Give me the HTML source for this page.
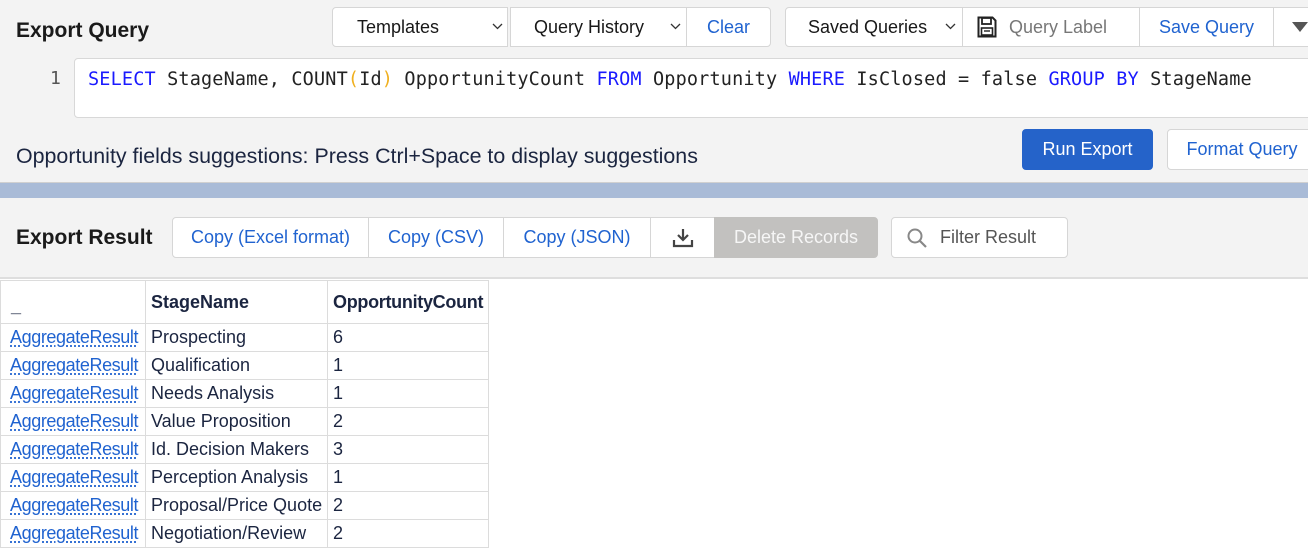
<!DOCTYPE html>
<html><head><meta charset="utf-8">
<style>
*{box-sizing:border-box;margin:0;padding:0}
body{width:1308px;height:560px;overflow:hidden;background:#fff;font-family:"Liberation Sans",sans-serif;position:relative}
.abs{position:absolute}
.top{left:0;top:0;width:1308px;height:182px;background:#f3f3f3}
.band{left:0;top:182px;width:1308px;height:16px;background:#a9bbd7;border-top:1px solid #d0d0d0}
.mid{left:0;top:198px;width:1308px;height:81px;background:#f3f3f3;border-bottom:2px solid #dedede}
.btn{position:absolute;background:#fff;border:1px solid #d6d6d6;display:flex;align-items:center;justify-content:center;font-size:18px;color:#181818}
.blue{color:#2063d0}
.chev{position:absolute}
h1{position:absolute;font-size:21px;font-weight:bold;color:#1a1a1a}
.editor{left:74px;top:58px;width:1240px;height:60px;background:#fff;border:1px solid #d8d8d8;border-radius:4px}
.code{left:88px;top:69px;font-family:"DejaVu Sans Mono","Liberation Mono",monospace;font-size:18.5px;color:#222;white-space:pre;letter-spacing:0.16px}
.kw{color:#1a1aff}.par{color:#f0b020}
table{position:absolute;left:0;top:280px;border-collapse:collapse;font-size:18px;color:#1b2540;table-layout:fixed;width:488px}
td,th{border:1px solid #dcdcdc;height:28px;padding:0 5px;text-align:left;white-space:nowrap;overflow:hidden}
th{height:43px;font-weight:bold;vertical-align:middle}
td a{color:#2063d0;text-decoration:underline dotted;text-underline-offset:3px;letter-spacing:-0.4px;margin-left:4px}
</style></head><body>
<div class="abs top"></div>
<h1 style="left:16px;top:19px">Export Query</h1>
<div class="btn" style="left:332px;top:7px;width:176px;height:40px;border-radius:4px 0 0 4px;justify-content:flex-start;padding-left:24px">Templates</div>
<svg class="chev" style="left:492px;top:23px" width="11" height="7"><path d="M1 1l4.5 4.5L10 1" fill="none" stroke="#333" stroke-width="1.3"/></svg>
<div class="btn" style="left:510px;top:7px;width:177px;height:40px;justify-content:flex-start;padding-left:23px">Query History</div>
<svg class="chev" style="left:670px;top:23px" width="11" height="7"><path d="M1 1l4.5 4.5L10 1" fill="none" stroke="#333" stroke-width="1.3"/></svg>
<div class="btn blue" style="left:686px;top:7px;width:85px;height:40px;border-radius:0 4px 4px 0">Clear</div>
<div class="btn" style="left:785px;top:7px;width:178px;height:40px;border-radius:4px 0 0 4px;justify-content:flex-start;padding-left:22px">Saved Queries</div>
<svg class="chev" style="left:945px;top:23px" width="11" height="7"><path d="M1 1l4.5 4.5L10 1" fill="none" stroke="#333" stroke-width="1.3"/></svg>
<div class="btn" style="left:962px;top:7px;width:178px;height:40px;justify-content:flex-start;padding-left:14px;color:#777">
<svg width="20" height="22" viewBox="0 0 20 22" style="margin-right:12px"><path d="M1.5 1.5h14l3 3v16h-17z" fill="none" stroke="#222" stroke-width="2"/><rect x="5" y="2" width="9" height="6" fill="none" stroke="#222" stroke-width="1.8"/><rect x="4.5" y="12" width="11" height="7" fill="none" stroke="#222" stroke-width="1.6"/><path d="M7 15h6" stroke="#222" stroke-width="1.4"/></svg>Query Label</div>
<div class="btn blue" style="left:1139px;top:7px;width:135px;height:40px">Save Query</div>
<div class="btn" style="left:1273px;top:7px;width:40px;height:40px;justify-content:flex-start;padding-left:18px"><svg width="16" height="10"><path d="M0 0h16L8 10z" fill="#555"/></svg></div>
<div class="abs" style="left:50px;top:68px;font-size:18px;color:#555;font-family:'DejaVu Sans Mono',monospace">1</div>
<div class="abs editor"></div>
<div class="abs code"><span class="kw">SELECT</span> StageName, COUNT<span class="par">(</span>Id<span class="par">)</span> OpportunityCount <span class="kw">FROM</span> Opportunity <span class="kw">WHERE</span> IsClosed = false <span class="kw">GROUP BY</span> StageName</div>
<div class="abs" style="left:16px;top:144px;font-size:21.4px;color:#1b2540">Opportunity fields suggestions: Press Ctrl+Space to display suggestions</div>
<div class="btn" style="left:1022px;top:129px;width:131px;height:41px;border-radius:4px;background:#2563c9;border-color:#2563c9;color:#fff">Run Export</div>
<div class="btn blue" style="left:1167px;top:129px;width:150px;height:41px;border-radius:4px">Format Query</div>
<div class="abs band"></div>
<div class="abs mid"></div>
<h1 style="left:16px;top:226px">Export Result</h1>
<div class="btn blue" style="left:172px;top:217px;width:197px;height:41px;border-radius:4px 0 0 4px">Copy (Excel format)</div>
<div class="btn blue" style="left:368px;top:217px;width:136px;height:41px">Copy (CSV)</div>
<div class="btn blue" style="left:503px;top:217px;width:148px;height:41px">Copy (JSON)</div>
<div class="btn" style="left:650px;top:217px;width:65px;height:41px"><svg width="22" height="20" viewBox="0 0 22 20"><path d="M11 1v11M6 7l5 5 5-5" fill="none" stroke="#444" stroke-width="2.2"/><path d="M2 12v6h18v-6" fill="none" stroke="#444" stroke-width="2.2"/></svg></div>
<div class="btn" style="left:714px;top:217px;width:164px;height:41px;background:#c2c1bf;border-color:#c2c1bf;color:#f6f6f6;border-radius:0 4px 4px 0">Delete Records</div>
<div class="btn" style="left:891px;top:217px;width:177px;height:41px;border-radius:4px;justify-content:flex-start;padding-left:14px;color:#555">
<svg width="22" height="22" viewBox="0 0 22 22" style="margin-right:12px"><circle cx="9" cy="9" r="6.5" fill="none" stroke="#888" stroke-width="2"/><path d="M14 14l6 6" stroke="#888" stroke-width="2.2"/></svg>Filter Result</div>
<table>
<colgroup><col style="width:145px"><col style="width:182px"><col style="width:161px"></colgroup>
<tr><th style="vertical-align:bottom;padding-bottom:6px;padding-left:10px">_</th><th>StageName</th><th style="letter-spacing:-0.3px">OpportunityCount</th></tr>
<tr><td><a>AggregateResult</a></td><td>Prospecting</td><td>6</td></tr>
<tr><td><a>AggregateResult</a></td><td>Qualification</td><td>1</td></tr>
<tr><td><a>AggregateResult</a></td><td>Needs Analysis</td><td>1</td></tr>
<tr><td><a>AggregateResult</a></td><td>Value Proposition</td><td>2</td></tr>
<tr><td><a>AggregateResult</a></td><td>Id. Decision Makers</td><td>3</td></tr>
<tr><td><a>AggregateResult</a></td><td>Perception Analysis</td><td>1</td></tr>
<tr><td><a>AggregateResult</a></td><td>Proposal/Price Quote</td><td>2</td></tr>
<tr><td><a>AggregateResult</a></td><td>Negotiation/Review</td><td>2</td></tr>
</table>
</body></html>
